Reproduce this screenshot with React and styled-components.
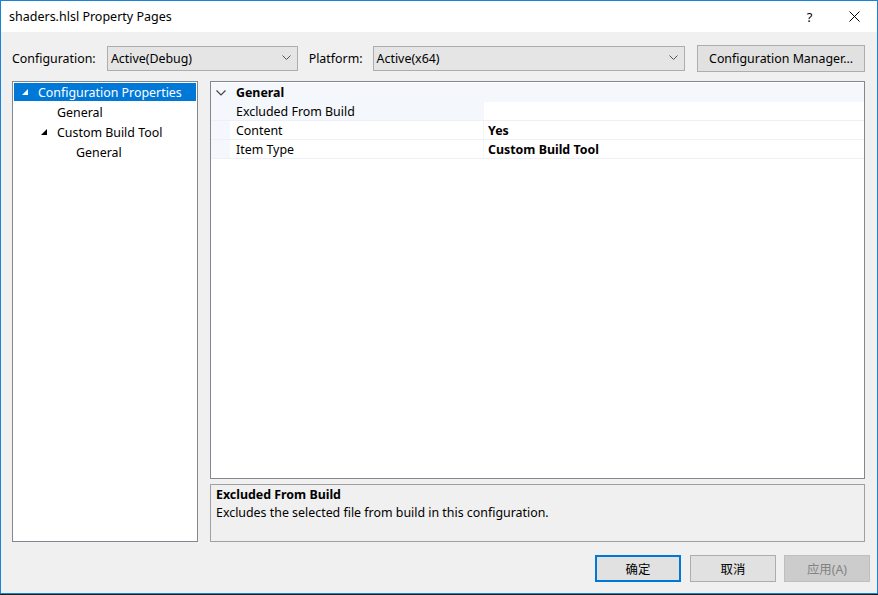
import React from "react";
import styled, { createGlobalStyle } from "styled-components";

const Global = createGlobalStyle`
  html, body { margin: 0; padding: 0; background: #1c1c1c; }
  * { box-sizing: border-box; }
  body { font-family: "Noto Sans", "Noto Sans CJK SC", sans-serif; font-size: 12.4px; color: #000; }
`;

const Window = styled.div`
  width: 878px;
  height: 594px;
  border: 1px solid #1883d7;
  background: #f0f0f0;
  display: flex;
  flex-direction: column;
`;

const TitleBar = styled.div`
  height: 31px;
  background: #fff;
  display: flex;
  align-items: center;
  padding-left: 8px;
  font-size: 12.5px;
`;

const Title = styled.div`
  flex: 1;
  padding-bottom: 1px;
`;

const TitleBtn = styled.div`
  width: 45px;
  height: 31px;
  display: flex;
  align-items: center;
  justify-content: center;
  font-size: 13px;
`;

const Body = styled.div`
  flex: 1;
  display: flex;
  flex-direction: column;
  padding: 13px 12px 10px 11px;
`;

const ConfigRow = styled.div`
  display: flex;
  align-items: center;
  height: 26px;
`;

const Label = styled.div`
  width: ${p => p.$w}px;
`;

const Combo = styled.div`
  width: ${p => p.$w}px;
  height: 25px;
  border: 1px solid #adadad;
  background: #e5e5e5;
  display: flex;
  align-items: center;
  padding-left: 3px;
  margin-right: ${p => p.$mr || 0}px;
`;

const ComboText = styled.div`
  flex: 1;
`;

const Chevron = styled.svg`
  width: 9px;
  height: 6px;
  margin-right: 6px;
`;

const Button = styled.div`
  width: ${p => p.$w}px;
  height: 27px;
  border: ${p => (p.$default ? "2px solid #0078d7" : "1px solid #adadad")};
  background: ${p => (p.$disabled ? "#cccccc" : "#e1e1e1")};
  color: ${p => (p.$disabled ? "#838383" : "#000")};
  border-color: ${p => (p.$disabled ? "#bfbfbf" : undefined)};
  margin-left: ${p => p.$ml || 0}px;
  display: flex;
  align-items: center;
  justify-content: center;
`;

const Main = styled.div`
  display: flex;
  gap: 12px;
  margin-top: 10px;
  height: 461px;
`;

const Tree = styled.div`
  width: 186px;
  border: 1px solid #828790;
  background: #fff;
  padding: 1px;
`;

const TreeItem = styled.div`
  display: flex;
  align-items: center;
  padding-left: ${p => p.$indent}px;
  background: ${p => (p.$selected ? "#0078d7" : "transparent")};
  color: ${p => (p.$selected ? "#fff" : "#000")};
  height: ${p => (p.$selected ? 18 : 20)}px;
  margin-bottom: ${p => (p.$selected ? 1 : 0)}px;
`;

const Expander = styled.svg`
  width: 6px;
  height: 6px;
  margin-right: 10px;
  fill: ${p => p.$color};
`;

const RightCol = styled.div`
  flex: 1;
  display: flex;
  flex-direction: column;
  gap: 5px;
`;

const Grid = styled.div`
  height: 398px;
  border: 1px solid #828790;
  background: #fff;
  padding-top: 1px;
`;

const CatRow = styled.div`
  height: 19px;
  background: #f4f7fb;
  display: flex;
  align-items: center;
  font-weight: 700;
`;

const CatName = styled.div`
  padding-left: 6px;
`;

const Margin = styled.div`
  width: 19px;
  align-self: stretch;
  background: #f4f7fb;
  display: flex;
  align-items: center;
  justify-content: center;
`;

const PropRow = styled.div`
  height: 19px;
  display: flex;
  border-bottom: 1px solid #edf1f7;
`;

const NameCell = styled.div`
  width: 254px;
  padding-left: 6px;
  display: flex;
  align-items: center;
  background: ${p => (p.$sel ? "#f4f7fb" : "#fff")};
  border-right: 1px solid #f4f6f9;
`;

const ValueCell = styled.div`
  flex: 1;
  padding-left: 4px;
  display: flex;
  align-items: center;
  font-weight: 700;
`;

const Desc = styled.div`
  height: 58px;
  border: 1px solid #a0a0a0;
  background: #f0f0f0;
  padding: 1px 5px;
  line-height: 18px;
`;

const DescTitle = styled.div`
  font-weight: 700;
`;

const Footer = styled.div`
  display: flex;
  justify-content: flex-end;
  margin-top: 13px;
  margin-right: -5px;
`;

const Down = () => (
  <Chevron viewBox="0 0 9 6">
    <path d="M0.5 0.5 L4.5 4.5 L8.5 0.5" fill="none" stroke="#555" strokeWidth="1" />
  </Chevron>
);

const Tri = ({ color }) => (
  <Expander viewBox="0 0 6 6" $color={color}>
    <polygon points="6,0 6,6 0,6" />
  </Expander>
);

export default function App() {
  return (
    <>
      <Global />
      <Window>
        <TitleBar>
          <Title>shaders.hlsl Property Pages</Title>
          <TitleBtn>?</TitleBtn>
          <TitleBtn>
            <svg width="11" height="11" viewBox="0 0 11 11">
              <path d="M0.5 0.5 L10.5 10.5 M10.5 0.5 L0.5 10.5" stroke="#000" strokeWidth="1" />
            </svg>
          </TitleBtn>
        </TitleBar>
        <Body>
          <ConfigRow>
            <Label $w={95}>Configuration:</Label>
            <Combo $w={191} $mr={11}>
              <ComboText>Active(Debug)</ComboText>
              <Down />
            </Combo>
            <Label $w={64}>Platform:</Label>
            <Combo $w={313} $mr={12}>
              <ComboText>Active(x64)</ComboText>
              <Down />
            </Combo>
            <Button $w={168}>Configuration Manager...</Button>
          </ConfigRow>
          <Main>
            <Tree>
              <TreeItem $indent={8} $selected>
                <Tri color="#fff" />
                Configuration Properties
              </TreeItem>
              <TreeItem $indent={43}>General</TreeItem>
              <TreeItem $indent={27}>
                <Tri color="#000" />
                Custom Build Tool
              </TreeItem>
              <TreeItem $indent={62}>General</TreeItem>
            </Tree>
            <RightCol>
              <Grid>
                <CatRow>
                  <Margin>
                    <svg width="10" height="6" viewBox="0 0 10 6">
                      <path d="M0.5 0.5 L5 5 L9.5 0.5" fill="none" stroke="#444" strokeWidth="1.2" />
                    </svg>
                  </Margin>
                  <CatName>General</CatName>
                </CatRow>
                <PropRow>
                  <Margin />
                  <NameCell $sel>Excluded From Build</NameCell>
                  <ValueCell></ValueCell>
                </PropRow>
                <PropRow>
                  <Margin />
                  <NameCell>Content</NameCell>
                  <ValueCell>Yes</ValueCell>
                </PropRow>
                <PropRow>
                  <Margin />
                  <NameCell>Item Type</NameCell>
                  <ValueCell>Custom Build Tool</ValueCell>
                </PropRow>
              </Grid>
              <Desc>
                <DescTitle>Excluded From Build</DescTitle>
                <div>Excludes the selected file from build in this configuration.</div>
              </Desc>
            </RightCol>
          </Main>
          <Footer>
            <Button $w={86} $default>确定</Button>
            <Button $w={86} $ml={9}>取消</Button>
            <Button $w={86} $ml={8} $disabled>应用(A)</Button>
          </Footer>
        </Body>
      </Window>
    </>
  );
}
